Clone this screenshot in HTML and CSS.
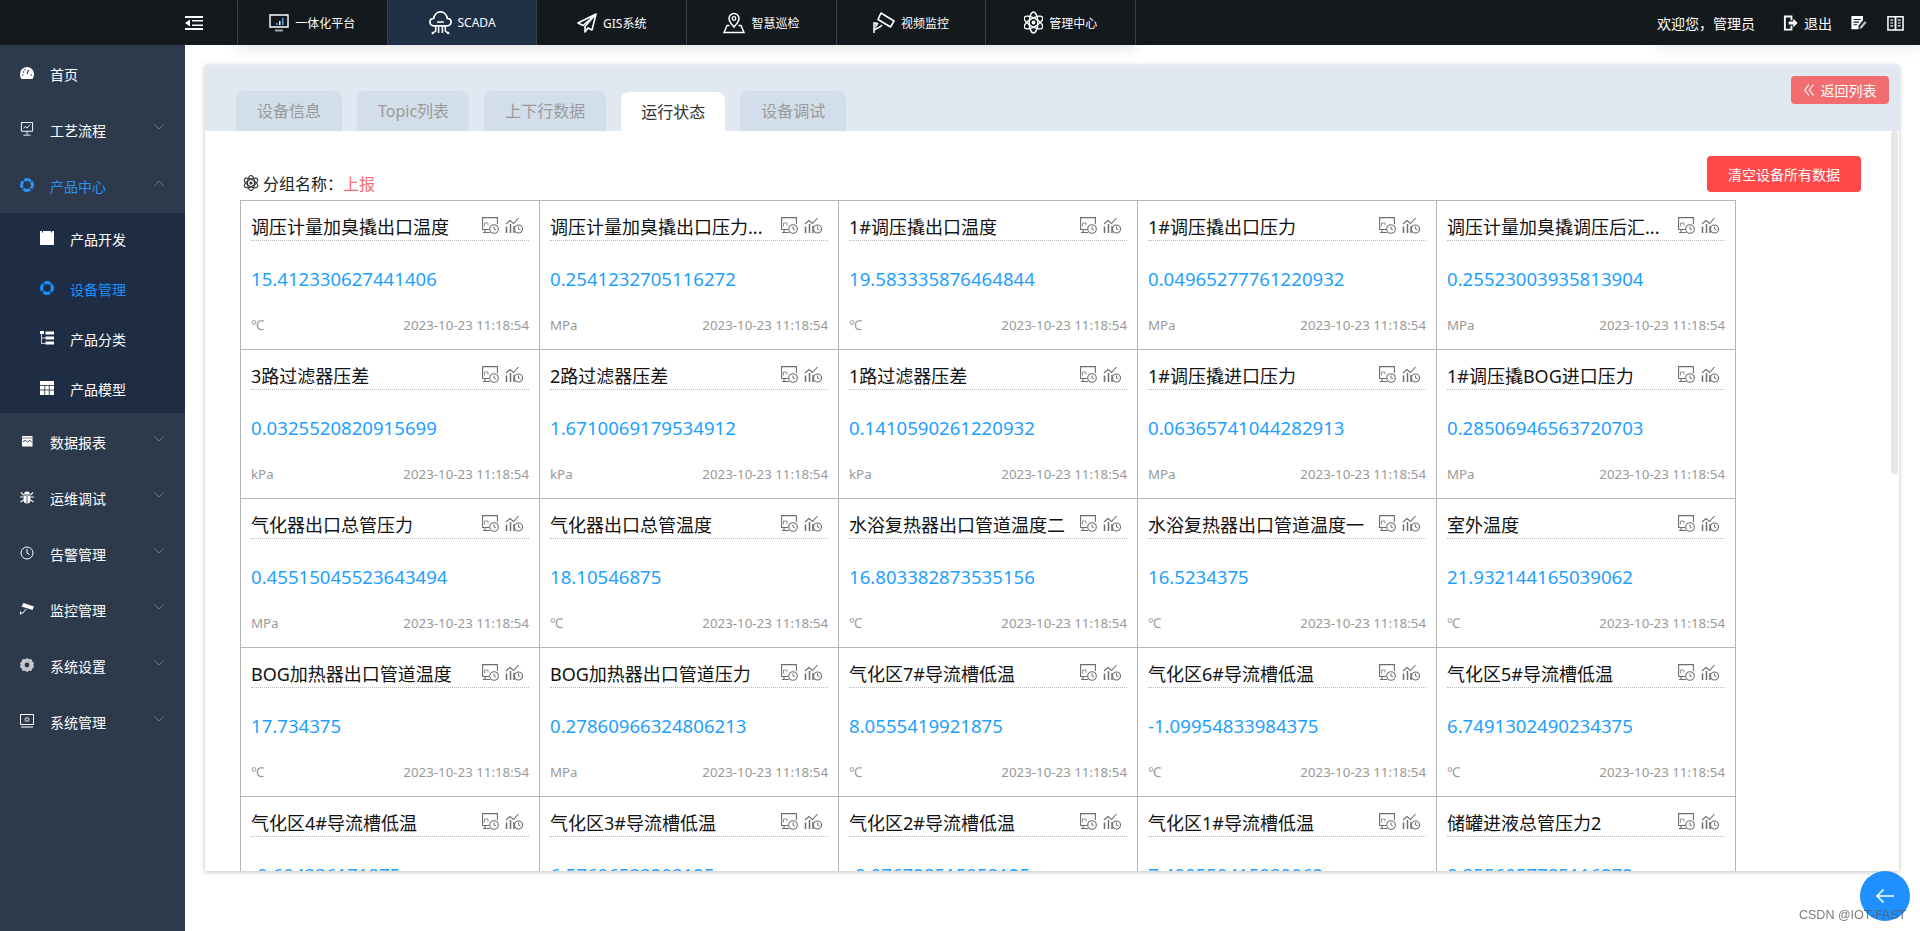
FILE: index.html
```html
<!DOCTYPE html>
<html lang="zh-CN">
<head>
    <meta charset="UTF-8">
    <meta name="viewport" content="width=device-width, initial-scale=1.0">
    <title>运行状态</title>
    <link rel="stylesheet" href="styles.css">
</head>
<body>
    <!-- icon sprite -->
    <svg class="sprite" xmlns="http://www.w3.org/2000/svg">
        <symbol id="i-toggle" viewBox="0 0 18 16">
            <path d="M0 1h18v2H0zM0 13h18v2H0zM7 5h11v1.500H7zM7 9.500h11V11H7z" fill="currentColor"/>
            <path d="M0 8l5-3.500v7z" fill="currentColor"/>
        </symbol>
        <symbol id="i-monitor" viewBox="0 0 20 18">
            <path d="M1 1h18v12H1z" fill="none" stroke="currentColor" stroke-width="1.400"/>
            <path d="M6 15.500h8v2H6z" fill="#9aa3ab"/>
            <path d="M7 9h1.500v2H7z" fill="#4ea3f5"/>
            <path d="M10 7h1.500v4H10z" fill="#fff"/>
            <path d="M13 4h1.500v7H13z" fill="#4ea3f5"/>
        </symbol>
        <symbol id="i-cloud" viewBox="0 0 24 25">
            <path d="M5 15.500C2.500 15.500 1 13.500 1 11.500S2.500 7.800 4.800 7.800C5.500 3.800 8.500 1 12 1s6.500 2.800 7.200 6.800c2.300 0 3.800 1.700 3.800 3.700s-1.500 4-4 4z" fill="none" stroke="currentColor" stroke-width="1.800"/>
            <path d="M8.500 11.500h7" stroke="currentColor" stroke-width="1.600" fill="none"/>
            <path d="M4 23l3-2v-5M10 23v-7M14 23v-7M20 23l-3-2v-5" fill="none" stroke="currentColor" stroke-width="1.600"/>
            <circle cx="4" cy="23" r="1.300" fill="currentColor"/>
            <circle cx="20" cy="23" r="1.300" fill="currentColor"/>
        </symbol>
        <symbol id="i-plane" viewBox="0 0 20 20">
            <path d="M19 1L1 10l5 2.500L19 1 8 13.500V19l3-4 4 2z" fill="none" stroke="currentColor" stroke-width="1.600" stroke-linejoin="round"/>
        </symbol>
        <symbol id="i-pin" viewBox="0 0 22 22">
            <path d="M11 15C8 11.500 6 9.500 6 6.500a5 5 0 0 1 10 0c0 3-2 5-5 8.500z" fill="none" stroke="currentColor" stroke-width="1.500"/>
            <circle cx="11" cy="6.500" r="1.800" fill="none" stroke="currentColor" stroke-width="1.300"/>
            <path d="M6.500 13.500H4L1 20.500h20l-3-7h-2.500" fill="none" stroke="currentColor" stroke-width="1.500"/>
        </symbol>
        <symbol id="i-camera" viewBox="0 0 22 22">
            <path d="M8 1l13 8-3.500 6L5 7.500z" fill="none" stroke="currentColor" stroke-width="1.600" stroke-linejoin="round"/>
            <path d="M5 11l-2 3v-3H1v10M1 18l6-3 2-2" fill="none" stroke="currentColor" stroke-width="1.500"/>
        </symbol>
        <symbol id="i-atom" viewBox="0 0 20 24">
            <g fill="none" stroke="currentColor" stroke-width="1.500">
                <ellipse cx="10" cy="12" rx="4.500" ry="11"/>
                <ellipse cx="10" cy="12" rx="4.500" ry="11" transform="rotate(60 10 12)"/>
                <ellipse cx="10" cy="12" rx="4.500" ry="11" transform="rotate(-60 10 12)"/>
            </g>
            <circle cx="10" cy="12" r="2" fill="currentColor"/>
        </symbol>
        <symbol id="i-logout" viewBox="0 0 16 16">
            <path d="M1 0h9v5H8V2H3v12h5v-3h2v5H1z" fill="currentColor"/>
            <path d="M6 6.500h5V3.500l4.500 4.500-4.500 4.500v-3H6z" fill="currentColor"/>
        </symbol>
        <symbol id="i-edit" viewBox="0 0 18 18">
            <path d="M1 1h13v5l-5 6v4H1z" fill="currentColor"/>
            <path d="M3.500 5h8M3.500 8h6M3.500 11h4" stroke="#13191d" stroke-width="1.200"/>
            <path d="M10 16l1-3 5-6 2 1.500-5 6z" fill="#bfc4c9"/>
        </symbol>
        <symbol id="i-book" viewBox="0 0 18 16">
            <path d="M1 1.500h16v14H1z" fill="none" stroke="currentColor" stroke-width="1.600"/>
            <path d="M9 1.500v14" stroke="currentColor" stroke-width="2"/>
            <path d="M3.500 5h3M3.500 8h3M3.500 11h3M11.500 5h3M11.500 8h3M11.500 11h3" stroke="currentColor" stroke-width="1.300"/>
        </symbol>
        <symbol id="i-gauge" viewBox="0 0 14 12">
            <path d="M7 0a7 7 0 0 0-7 7c0 2 .6 3.600 1.600 5h10.800c1-1.400 1.600-3 1.600-5a7 7 0 0 0-7-7z" fill="currentColor"/>
            <path d="M7 7l1.500-4M3 4.500l1 1M2 8h1.500M10.500 8H12M5 2.200v1.200" stroke="#2d3a4c" stroke-width="1.100"/>
        </symbol>
        <symbol id="i-screen" viewBox="0 0 14 16">
            <path d="M.6.600h12.800v10H.6z" fill="none" stroke="currentColor" stroke-width="1.100"/>
            <path d="M7 11v3M3 15h8" stroke="currentColor" stroke-width="1.100"/>
            <path d="M3 7l2.500-2L7 7l3.500-4" fill="none" stroke="currentColor" stroke-width="1"/>
        </symbol>
        <symbol id="i-ring" viewBox="0 0 14 14">
            <circle cx="7" cy="7" r="5.300" fill="none" stroke="currentColor" stroke-width="3" stroke-dasharray="7 1.330" stroke-dashoffset="-.67" transform="rotate(-45 7 7)"/>
        </symbol>
        <symbol id="i-doc" viewBox="0 0 14 14">
            <path d="M0 0h2v1.500h1V0h8v1.500h1V0h2v14H0z" fill="currentColor"/>
        </symbol>
        <symbol id="i-tree" viewBox="0 0 14 14">
            <path d="M0 0h4v3H0zM5.500 .5H14v3H5.500zM5.500 5.500H14v3H5.500zM5.500 10.500H14v3H5.500z" fill="currentColor"/>
            <path d="M1.500 3v9.500h4M1.500 7h4" fill="none" stroke="currentColor" stroke-width=".8"/>
        </symbol>
        <symbol id="i-table" viewBox="0 0 14 14">
            <path d="M0 0h14v14H0z" fill="currentColor"/>
            <path d="M0 4.500h14M0 9h14M4.700 4.500V14M9.300 4.500V14" stroke="#1f2d44" stroke-width=".8"/>
        </symbol>
        <symbol id="i-report" viewBox="0 0 14 14">
            <path d="M2 2h10.500v10.500H2z" fill="currentColor"/>
            <path d="M3 7.500l2.500-1 2 1.500 2-1.500 2 1" fill="none" stroke="#2d3a4c" stroke-width="1"/>
            <path d="M2 4h10.500" stroke="#2d3a4c" stroke-width=".6"/>
        </symbol>
        <symbol id="i-bug" viewBox="0 0 14 14">
            <path d="M4 4.500a3 3 0 0 1 6 0zM3.500 5.500h7V10a3.500 3.500 0 0 1-7 0z" fill="currentColor"/>
            <path d="M0 7h3M11 7h3M.5 12l3-2M13.500 12l-3-2M1 2.500l2.500 2.500M13 2.500L10.500 5" stroke="currentColor" stroke-width="1.100"/>
            <path d="M7 6v7" stroke="#2d3a4c" stroke-width=".8"/>
        </symbol>
        <symbol id="i-clock" viewBox="0 0 14 14">
            <circle cx="7" cy="7" r="6" fill="none" stroke="currentColor" stroke-width="1"/>
            <path d="M7 3v4.300l2.600 1.200" fill="none" stroke="currentColor" stroke-width="1"/>
        </symbol>
        <symbol id="i-cctv" viewBox="0 0 14 14">
            <path d="M3.500 1L14 4.500 12.500 8 1.500 4.500z" fill="currentColor"/>
            <path d="M.5 9.500v3M.5 11h2.500L6 7" fill="none" stroke="currentColor" stroke-width="1"/>
        </symbol>
        <symbol id="i-gear" viewBox="0 0 14 14">
            <path d="M7 0l2 1.200 2.400-.2.800 2.200L14 5l-.6 2 .6 2-1.800 1.800-.8 2.200-2.400-.2L7 14l-2-1.200-2.400.2-.8-2.200L0 9l.6-2L0 5l1.800-1.800L2.600 1 5 1.200z" fill="#c4c7cb"/>
            <circle cx="7" cy="7" r="2.400" fill="#2d3a4c"/>
        </symbol>
        <symbol id="i-system" viewBox="0 0 14 14">
            <path d="M.5.500h13v10H.5z" fill="none" stroke="currentColor" stroke-width="1"/>
            <path d="M1 13h12" stroke="currentColor" stroke-width="1"/>
            <circle cx="7" cy="5.500" r="2.500" fill="#aab0b7"/>
            <circle cx="7" cy="5.500" r="1" fill="#2d3a4c"/>
        </symbol>
        <symbol id="i-down" viewBox="0 0 10 6">
            <path d="M.5.500L5 5 9.500.500" fill="none" stroke="currentColor" stroke-width="1"/>
        </symbol>
        <symbol id="i-up" viewBox="0 0 10 6">
            <path d="M.5 5.500L5 1l4.500 4.500" fill="none" stroke="currentColor" stroke-width="1"/>
        </symbol>
        <symbol id="i-back" viewBox="0 0 10 12">
            <path d="M5 .5L.8 6 5 11.500M9.500 .5L5.300 6l4.200 5.500" fill="none" stroke="currentColor" stroke-width="1.200"/>
        </symbol>
        <symbol id="i-history" viewBox="0 0 17 17">
            <path d="M7 12.500H.6V.6h14.800v6.500" fill="none" stroke="#6d6d6d" stroke-width="1.100"/>
            <path d="M3 12.500v3M1 15.500h7" stroke="#6d6d6d" stroke-width="1.100"/>
            <path d="M2.500 9.500V6H6v2.500" fill="none" stroke="#a08c8c" stroke-width="1"/>
            <circle cx="12" cy="12" r="4.300" fill="#fff" stroke="#6d6d6d" stroke-width="1.100"/>
            <path d="M12 9.500V12l2 1" fill="none" stroke="#6d6d6d" stroke-width="1"/>
        </symbol>
        <symbol id="i-trend" viewBox="0 0 18 17">
            <path d="M1 7l4-3.500 3.500 3 5-5.500" fill="none" stroke="#6d6d6d" stroke-width="1.100"/>
            <path d="M1.500 9.500v6.500M5.500 7v9M9 9v7" stroke="#6d6d6d" stroke-width="1.500"/>
            <circle cx="13.500" cy="12" r="4" fill="#fff" stroke="#6d6d6d" stroke-width="1.100"/>
            <path d="M13.500 9.500V12l2 1" fill="none" stroke="#6d6d6d" stroke-width="1"/>
        </symbol>
        <symbol id="i-group" viewBox="0 0 16 16">
            <g fill="none" stroke="#333" stroke-width="1.100">
                <ellipse cx="8" cy="8" rx="3.500" ry="7.500"/>
                <ellipse cx="8" cy="8" rx="3.500" ry="7.500" transform="rotate(60 8 8)"/>
                <ellipse cx="8" cy="8" rx="3.500" ry="7.500" transform="rotate(-60 8 8)"/>
            </g>
            <circle cx="8" cy="8" r="1.600" fill="#333"/>
        </symbol>
    </svg>

    <header class="topbar">
        <div class="topbar-toggle"><svg class="ico-toggle"><use href="#i-toggle"/></svg></div>
        <nav class="topnav">
            <a class="topnav-item"><svg class="ico-monitor"><use href="#i-monitor"/></svg>一体化平台</a>
            <a class="topnav-item active"><svg class="ico-cloud"><use href="#i-cloud"/></svg>SCADA</a>
            <a class="topnav-item"><svg class="ico-plane"><use href="#i-plane"/></svg>GIS系统</a>
            <a class="topnav-item"><svg class="ico-pin"><use href="#i-pin"/></svg>智慧巡检</a>
            <a class="topnav-item"><svg class="ico-pin"><use href="#i-camera"/></svg>视频监控</a>
            <a class="topnav-item"><svg class="ico-atom"><use href="#i-atom"/></svg>管理中心</a>
        </nav>
        <div class="topbar-user">
            <span class="welcome">欢迎您，管理员</span>
            <a class="logout"><svg class="ico-logout"><use href="#i-logout"/></svg>退出</a>
            <svg class="ico-edit"><use href="#i-edit"/></svg>
            <svg class="ico-edit"><use href="#i-book"/></svg>
        </div>
    </header>

    <div class="layout">
        <aside class="sidebar">
            <a class="menu-item"><svg class="menu-ico"><use href="#i-gauge"/></svg><span>首页</span></a>
            <a class="menu-item"><svg class="menu-ico"><use href="#i-screen"/></svg><span>工艺流程</span><svg class="chevron"><use href="#i-down"/></svg></a>
            <a class="menu-item active"><svg class="menu-ico"><use href="#i-ring"/></svg><span>产品中心</span><svg class="chevron"><use href="#i-up"/></svg></a>
            <div class="submenu">
                <a class="sub-item"><svg class="menu-ico"><use href="#i-doc"/></svg><span>产品开发</span></a>
                <a class="sub-item active"><svg class="menu-ico"><use href="#i-ring"/></svg><span>设备管理</span></a>
                <a class="sub-item"><svg class="menu-ico"><use href="#i-tree"/></svg><span>产品分类</span></a>
                <a class="sub-item"><svg class="menu-ico"><use href="#i-table"/></svg><span>产品模型</span></a>
            </div>
            <a class="menu-item"><svg class="menu-ico"><use href="#i-report"/></svg><span>数据报表</span><svg class="chevron"><use href="#i-down"/></svg></a>
            <a class="menu-item"><svg class="menu-ico"><use href="#i-bug"/></svg><span>运维调试</span><svg class="chevron"><use href="#i-down"/></svg></a>
            <a class="menu-item"><svg class="menu-ico"><use href="#i-clock"/></svg><span>告警管理</span><svg class="chevron"><use href="#i-down"/></svg></a>
            <a class="menu-item"><svg class="menu-ico"><use href="#i-cctv"/></svg><span>监控管理</span><svg class="chevron"><use href="#i-down"/></svg></a>
            <a class="menu-item"><svg class="menu-ico"><use href="#i-gear"/></svg><span>系统设置</span><svg class="chevron"><use href="#i-down"/></svg></a>
            <a class="menu-item"><svg class="menu-ico"><use href="#i-system"/></svg><span>系统管理</span><svg class="chevron"><use href="#i-down"/></svg></a>
        </aside>

        <main class="main">
            <section class="panel">
                <div class="panel-head">
                    <div class="tabs">
                        <a class="tab">设备信息</a>
                        <a class="tab tab-topic">Topic列表</a>
                        <a class="tab">上下行数据</a>
                        <a class="tab active">运行状态</a>
                        <a class="tab">设备调试</a>
                    </div>
                    <button class="btn-back"><svg class="ico-back"><use href="#i-back"/></svg>返回列表</button>
                </div>
                <div class="panel-body">
                    <div class="toolbar">
                        <div class="group-name"><svg class="ico-group"><use href="#i-group"/></svg>分组名称：<span class="group-value">上报</span></div>
                        <button class="btn-clear">清空设备所有数据</button>
                    </div>
                    <div class="cards">
                        <div class="card"><div class="card-head"><span class="card-title">调压计量加臭撬出口温度</span><svg class="card-ico"><use href="#i-history"/></svg><svg class="card-ico"><use href="#i-trend"/></svg></div><div class="card-value">15.412330627441406</div><div class="card-foot"><span>℃</span><span>2023-10-23 11:18:54</span></div></div>
                        <div class="card"><div class="card-head"><span class="card-title">调压计量加臭撬出口压力...</span><svg class="card-ico"><use href="#i-history"/></svg><svg class="card-ico"><use href="#i-trend"/></svg></div><div class="card-value">0.2541232705116272</div><div class="card-foot"><span>MPa</span><span>2023-10-23 11:18:54</span></div></div>
                        <div class="card"><div class="card-head"><span class="card-title">1#调压撬出口温度</span><svg class="card-ico"><use href="#i-history"/></svg><svg class="card-ico"><use href="#i-trend"/></svg></div><div class="card-value">19.583335876464844</div><div class="card-foot"><span>℃</span><span>2023-10-23 11:18:54</span></div></div>
                        <div class="card"><div class="card-head"><span class="card-title">1#调压撬出口压力</span><svg class="card-ico"><use href="#i-history"/></svg><svg class="card-ico"><use href="#i-trend"/></svg></div><div class="card-value">0.04965277761220932</div><div class="card-foot"><span>MPa</span><span>2023-10-23 11:18:54</span></div></div>
                        <div class="card"><div class="card-head"><span class="card-title">调压计量加臭撬调压后汇...</span><svg class="card-ico"><use href="#i-history"/></svg><svg class="card-ico"><use href="#i-trend"/></svg></div><div class="card-value">0.25523003935813904</div><div class="card-foot"><span>MPa</span><span>2023-10-23 11:18:54</span></div></div>

                        <div class="card"><div class="card-head"><span class="card-title">3路过滤器压差</span><svg class="card-ico"><use href="#i-history"/></svg><svg class="card-ico"><use href="#i-trend"/></svg></div><div class="card-value">0.0325520820915699</div><div class="card-foot"><span>kPa</span><span>2023-10-23 11:18:54</span></div></div>
                        <div class="card"><div class="card-head"><span class="card-title">2路过滤器压差</span><svg class="card-ico"><use href="#i-history"/></svg><svg class="card-ico"><use href="#i-trend"/></svg></div><div class="card-value">1.6710069179534912</div><div class="card-foot"><span>kPa</span><span>2023-10-23 11:18:54</span></div></div>
                        <div class="card"><div class="card-head"><span class="card-title">1路过滤器压差</span><svg class="card-ico"><use href="#i-history"/></svg><svg class="card-ico"><use href="#i-trend"/></svg></div><div class="card-value">0.1410590261220932</div><div class="card-foot"><span>kPa</span><span>2023-10-23 11:18:54</span></div></div>
                        <div class="card"><div class="card-head"><span class="card-title">1#调压撬进口压力</span><svg class="card-ico"><use href="#i-history"/></svg><svg class="card-ico"><use href="#i-trend"/></svg></div><div class="card-value">0.06365741044282913</div><div class="card-foot"><span>MPa</span><span>2023-10-23 11:18:54</span></div></div>
                        <div class="card"><div class="card-head"><span class="card-title">1#调压撬BOG进口压力</span><svg class="card-ico"><use href="#i-history"/></svg><svg class="card-ico"><use href="#i-trend"/></svg></div><div class="card-value">0.28506946563720703</div><div class="card-foot"><span>MPa</span><span>2023-10-23 11:18:54</span></div></div>

                        <div class="card"><div class="card-head"><span class="card-title">气化器出口总管压力</span><svg class="card-ico"><use href="#i-history"/></svg><svg class="card-ico"><use href="#i-trend"/></svg></div><div class="card-value">0.45515045523643494</div><div class="card-foot"><span>MPa</span><span>2023-10-23 11:18:54</span></div></div>
                        <div class="card"><div class="card-head"><span class="card-title">气化器出口总管温度</span><svg class="card-ico"><use href="#i-history"/></svg><svg class="card-ico"><use href="#i-trend"/></svg></div><div class="card-value">18.10546875</div><div class="card-foot"><span>℃</span><span>2023-10-23 11:18:54</span></div></div>
                        <div class="card"><div class="card-head"><span class="card-title">水浴复热器出口管道温度二</span><svg class="card-ico"><use href="#i-history"/></svg><svg class="card-ico"><use href="#i-trend"/></svg></div><div class="card-value">16.803382873535156</div><div class="card-foot"><span>℃</span><span>2023-10-23 11:18:54</span></div></div>
                        <div class="card"><div class="card-head"><span class="card-title">水浴复热器出口管道温度一</span><svg class="card-ico"><use href="#i-history"/></svg><svg class="card-ico"><use href="#i-trend"/></svg></div><div class="card-value">16.5234375</div><div class="card-foot"><span>℃</span><span>2023-10-23 11:18:54</span></div></div>
                        <div class="card"><div class="card-head"><span class="card-title">室外温度</span><svg class="card-ico"><use href="#i-history"/></svg><svg class="card-ico"><use href="#i-trend"/></svg></div><div class="card-value">21.932144165039062</div><div class="card-foot"><span>℃</span><span>2023-10-23 11:18:54</span></div></div>

                        <div class="card"><div class="card-head"><span class="card-title">BOG加热器出口管道温度</span><svg class="card-ico"><use href="#i-history"/></svg><svg class="card-ico"><use href="#i-trend"/></svg></div><div class="card-value">17.734375</div><div class="card-foot"><span>℃</span><span>2023-10-23 11:18:54</span></div></div>
                        <div class="card"><div class="card-head"><span class="card-title">BOG加热器出口管道压力</span><svg class="card-ico"><use href="#i-history"/></svg><svg class="card-ico"><use href="#i-trend"/></svg></div><div class="card-value">0.27860966324806213</div><div class="card-foot"><span>MPa</span><span>2023-10-23 11:18:54</span></div></div>
                        <div class="card"><div class="card-head"><span class="card-title">气化区7#导流槽低温</span><svg class="card-ico"><use href="#i-history"/></svg><svg class="card-ico"><use href="#i-trend"/></svg></div><div class="card-value">8.0555419921875</div><div class="card-foot"><span>℃</span><span>2023-10-23 11:18:54</span></div></div>
                        <div class="card"><div class="card-head"><span class="card-title">气化区6#导流槽低温</span><svg class="card-ico"><use href="#i-history"/></svg><svg class="card-ico"><use href="#i-trend"/></svg></div><div class="card-value">-1.09954833984375</div><div class="card-foot"><span>℃</span><span>2023-10-23 11:18:54</span></div></div>
                        <div class="card"><div class="card-head"><span class="card-title">气化区5#导流槽低温</span><svg class="card-ico"><use href="#i-history"/></svg><svg class="card-ico"><use href="#i-trend"/></svg></div><div class="card-value">6.7491302490234375</div><div class="card-foot"><span>℃</span><span>2023-10-23 11:18:54</span></div></div>

                        <div class="card"><div class="card-head"><span class="card-title">气化区4#导流槽低温</span><svg class="card-ico"><use href="#i-history"/></svg><svg class="card-ico"><use href="#i-trend"/></svg></div><div class="card-value">-0.694336171875</div></div>
                        <div class="card"><div class="card-head"><span class="card-title">气化区3#导流槽低温</span><svg class="card-ico"><use href="#i-history"/></svg><svg class="card-ico"><use href="#i-trend"/></svg></div><div class="card-value">6.57696533203125</div></div>
                        <div class="card"><div class="card-head"><span class="card-title">气化区2#导流槽低温</span><svg class="card-ico"><use href="#i-history"/></svg><svg class="card-ico"><use href="#i-trend"/></svg></div><div class="card-value">-0.076728515953125</div></div>
                        <div class="card"><div class="card-head"><span class="card-title">气化区1#导流槽低温</span><svg class="card-ico"><use href="#i-history"/></svg><svg class="card-ico"><use href="#i-trend"/></svg></div><div class="card-value">7.400550415039062</div></div>
                        <div class="card"><div class="card-head"><span class="card-title">储罐进液总管压力2</span><svg class="card-ico"><use href="#i-history"/></svg><svg class="card-ico"><use href="#i-trend"/></svg></div><div class="card-value">0.3556057785116272</div></div>
                    </div>
                </div>
                <div class="scroll-thumb"></div>
            </section>
        </main>
    </div>

    <button class="fab"><svg class="ico-fab" viewBox="0 0 20 16"><path d="M19 8H2M8.500 1.500L2 8l6.500 6.500" fill="none" stroke="#fff" stroke-width="1.600"/></svg></button>
    <div class="watermark">CSDN @IOT-FAST</div>
</body>
</html>
```

FILE: styles.css
```css
* {
    box-sizing: border-box;
}

body {
    margin: 0;
    height: 100vh;
    overflow: hidden;
    font-family: "Noto Sans", "Noto Sans CJK SC", sans-serif;
    font-size: 14px;
    background-color: #fff;
}

.sprite {
    display: none;
}

/* top bar */
.topbar {
    display: flex;
    height: 45px;
    background-color: #13191d;
    color: #fff;
    position: relative;
}

.topbar-toggle {
    width: 237px;
    display: flex;
    align-items: center;
    justify-content: flex-end;
    padding-right: 34px;
}

.ico-toggle {
    width: 18px;
    height: 16px;
}

.topnav {
    display: flex;
    border-left: 1px solid #39424a;
    box-shadow: 0 2px 14px rgba(0, 0, 0, 0.12);
}

.topnav-item {
    width: 149.7px;
    display: flex;
    align-items: center;
    justify-content: center;
    gap: 6px;
    font-size: 12px;
    border-right: 1px solid #39424a;
}

.topnav-item.active {
    background-color: #1f2f46;
}

.ico-monitor {
    width: 20px;
    height: 18px;
}

.ico-cloud {
    width: 23px;
    height: 24px;
}

.ico-plane {
    width: 20px;
    height: 20px;
}

.ico-pin {
    width: 22px;
    height: 22px;
}

.ico-atom {
    width: 19px;
    height: 23px;
}

.topbar-user {
    margin-left: auto;
    display: flex;
    align-items: center;
    padding-right: 16px;
    width: 263px;
    justify-content: flex-end;
    box-shadow: 0 2px 14px rgba(0, 0, 0, 0.1);
}

.welcome {
    margin-right: 28px;
}

.logout {
    display: flex;
    align-items: center;
    gap: 6px;
    margin-right: 18px;
}

.ico-logout {
    width: 15px;
    height: 16px;
}

.ico-edit {
    width: 17px;
    height: 16px;
}

.ico-edit + .ico-edit {
    margin-left: 20px;
}

/* sidebar */
.layout {
    display: flex;
    height: calc(100vh - 45px);
}

.sidebar {
    width: 185px;
    flex-shrink: 0;
    background-color: #2d3a4c;
    color: #fff;
}

.menu-item, .sub-item {
    display: flex;
    align-items: center;
}

.menu-item {
    height: 56px;
    padding-left: 20px;
}

.menu-item span, .sub-item span {
    margin-top: 2px;
}

.menu-ico {
    width: 14px;
    height: 14px;
    margin-right: 16px;
}

.chevron {
    width: 10px;
    height: 6px;
    margin-left: auto;
    margin-right: 21px;
    margin-bottom: 4px;
    color: #6f7a89;
}

.menu-item.active {
    color: #2f8ff5;
}

.submenu {
    background-color: #1f2d44;
}

.sub-item {
    height: 50px;
    padding-left: 40px;
}

.sub-item.active {
    color: #1890ff;
}

/* main panel */
.main {
    flex: 1;
    min-width: 0;
    padding: 20px 21px 0 20px;
}

.panel {
    position: relative;
    height: 806px;
    display: flex;
    flex-direction: column;
    background-color: #fff;
    box-shadow: 0 1px 5px rgba(0, 0, 0, 0.25);
    overflow: hidden;
}

.panel-head {
    height: 66px;
    flex-shrink: 0;
    display: flex;
    justify-content: space-between;
    background-color: #e2e8f2;
    padding-left: 31px;
    padding-right: 10px;
}

.tabs {
    display: flex;
    align-items: flex-end;
    gap: 15px;
}

.tab {
    height: 40px;
    line-height: 40px;
    padding: 0 21px;
    font-size: 16px;
    color: #9a9a9a;
    background-color: #d3deeb;
    border-radius: 8px 8px 0 0;
}

.tab-topic {
    padding-right: 20px;
}

.tab.active {
    height: 39px;
    padding: 0 20px;
    color: #333;
    background-color: #fff;
}

.btn-back {
    margin-top: 11px;
    width: 98px;
    height: 28px;
    border: 0;
    border-radius: 4px;
    background-color: #f26d6f;
    color: #fff;
    font-family: inherit;
    font-size: 14px;
    padding: 0;
    display: flex;
    align-items: center;
    justify-content: center;
    gap: 7px;
}

.ico-back {
    width: 10px;
    height: 12px;
}

.panel-body {
    flex: 1;
    min-height: 0;
    padding: 25px 38px 0 35px;
}

.scroll-thumb {
    position: absolute;
    right: 1px;
    top: 66px;
    width: 7px;
    height: 343px;
    background-color: #e6e6e6;
    border-radius: 4px;
}

.toolbar {
    height: 44px;
    display: flex;
    justify-content: space-between;
}

.group-name {
    display: flex;
    align-items: center;
    align-self: flex-end;
    height: 34px;
    padding-left: 3px;
    font-size: 16px;
    color: #222;
}

.ico-group {
    width: 16px;
    height: 16px;
    margin-right: 4px;
}

.group-value {
    color: #f56c6c;
}

.btn-clear {
    width: 154px;
    height: 36px;
    border: 0;
    border-radius: 4px;
    background-color: #ff4949;
    color: #fff;
    font-family: inherit;
    font-size: 14px;
    padding: 0;
}

.cards {
    display: grid;
    grid-template-columns: repeat(5, 299px);
    grid-auto-rows: 149px;
    width: 1496px;
    border-top: 1px solid #b5b5b5;
    border-left: 1px solid #b5b5b5;
}

.card {
    border-right: 1px solid #b5b5b5;
    border-bottom: 1px solid #b5b5b5;
    padding: 0 10px;
}

.card-head {
    height: 40px;
    display: flex;
    align-items: center;
    padding-top: 10px;
    border-bottom: 1px dotted #bbb;
}

.card-title {
    width: 223px;
    font-size: 18px;
    color: #111;
    white-space: nowrap;
    margin-right: 8px;
}

.card-ico {
    width: 17px;
    height: 17px;
}

.card-ico + .card-ico {
    width: 18px;
    margin-left: 6px;
}

.card-value {
    margin-top: 23px;
    line-height: 30px;
    font-size: 18.6px;
    color: #1e9fff;
}

.card-foot {
    margin-top: 21px;
    line-height: 20px;
    display: flex;
    justify-content: space-between;
    font-size: 13.3px;
    color: #999;
}

/* floating bits */
.fab {
    position: fixed;
    left: 1860px;
    top: 871px;
    width: 50px;
    height: 50px;
    border: 0;
    border-radius: 50%;
    background-color: #1e90ff;
    display: flex;
    align-items: center;
    justify-content: center;
}

.ico-fab {
    width: 20px;
    height: 16px;
}

.watermark {
    position: fixed;
    left: 1799px;
    top: 908px;
    font-family: "Liberation Sans", sans-serif;
    font-size: 12.5px;
    color: rgba(90, 90, 90, 0.8);
}
```
